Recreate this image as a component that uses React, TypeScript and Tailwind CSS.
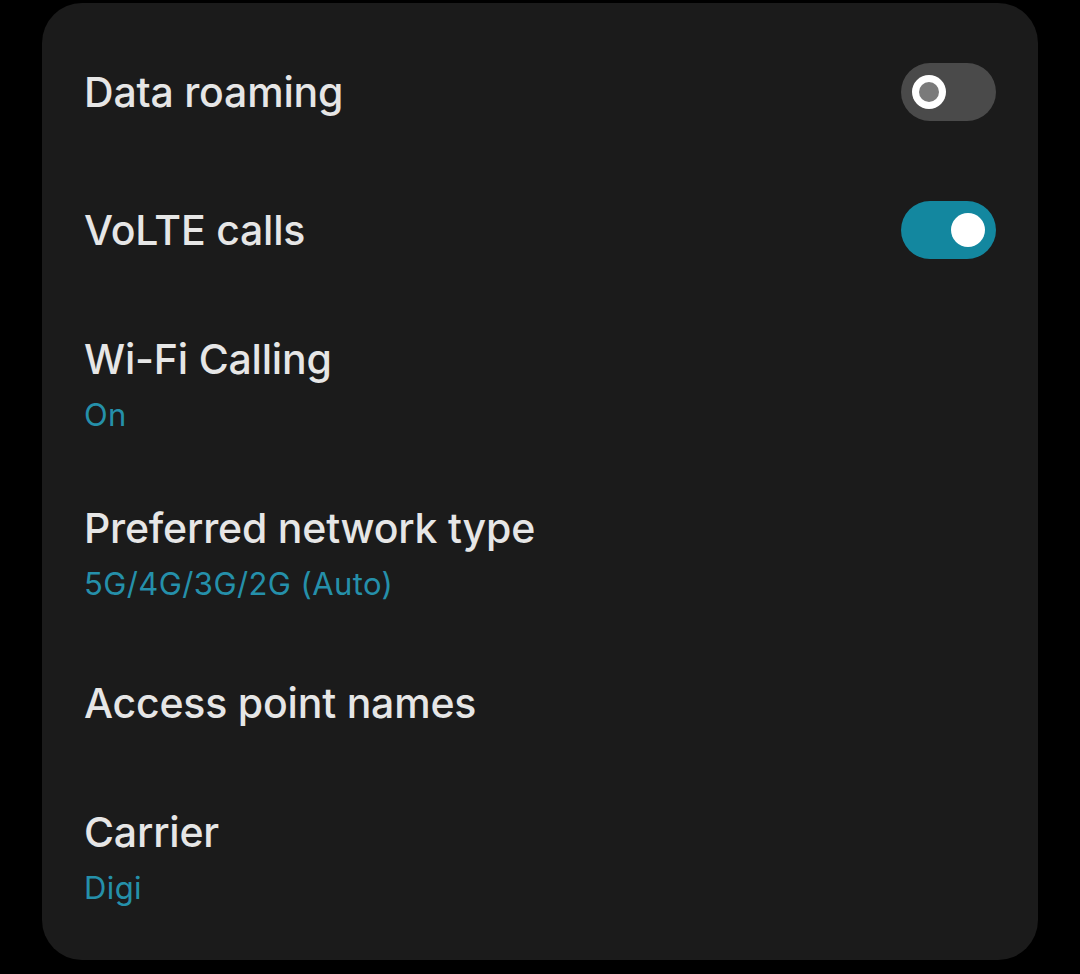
import React from "react";

function Toggle({ on }: { on: boolean }) {
  if (on) {
    return (
      <div className="flex h-[58px] w-[95px] shrink-0 items-center justify-end rounded-full bg-[#13879f] pr-[11px]">
        <div className="h-[34px] w-[34px] rounded-full bg-white" />
      </div>
    );
  }
  return (
    <div className="flex h-[58px] w-[95px] shrink-0 items-center justify-start rounded-full bg-[#4a4a4a] pl-[11px]">
      <div className="flex h-[34px] w-[34px] items-center justify-center rounded-full bg-white">
        <div className="h-[20px] w-[20px] rounded-full bg-[#7a7a7a]" />
      </div>
    </div>
  );
}

function Row({
  title,
  sub,
  toggle,
  h,
}: {
  title: string;
  sub?: string;
  toggle?: boolean;
  h: string;
}) {
  return (
    <div className={`flex items-center justify-between pl-[42px] pr-[42px] ${h}`}>
      <div className="flex flex-col">
        <div className="text-[41px] font-medium leading-[48px] tracking-[-0.2px] text-[#e6e6e6]">{title}</div>
        {sub && (
          <div className="mt-[14px] text-[31px] leading-[36px] tracking-[0.4px] text-[#2590aa]">{sub}</div>
        )}
      </div>
      {toggle !== undefined && <Toggle on={toggle} />}
    </div>
  );
}

export default function App() {
  return (
    <div
      className="h-[974px] w-[1080px] bg-black pt-[3px]"
      style={{ fontFamily: "Inter, 'Noto Sans', sans-serif" }}
    >
      <div className="mx-[42px] flex h-[957px] flex-col rounded-[40px] bg-[#1b1b1b] pt-[20px]">
        <Row title="Data roaming" toggle={false} h="h-[138px]" />
        <Row title="VoLTE calls" toggle={true} h="h-[138px]" />
        <Row title="Wi-Fi Calling" sub="On" h="h-[170px]" />
        <Row title="Preferred network type" sub="5G/4G/3G/2G (Auto)" h="h-[168px]" />
        <Row title="Access point names" h="h-[132px]" />
        <Row title="Carrier" sub="Digi" h="h-[176px]" />
      </div>
    </div>
  );
}
